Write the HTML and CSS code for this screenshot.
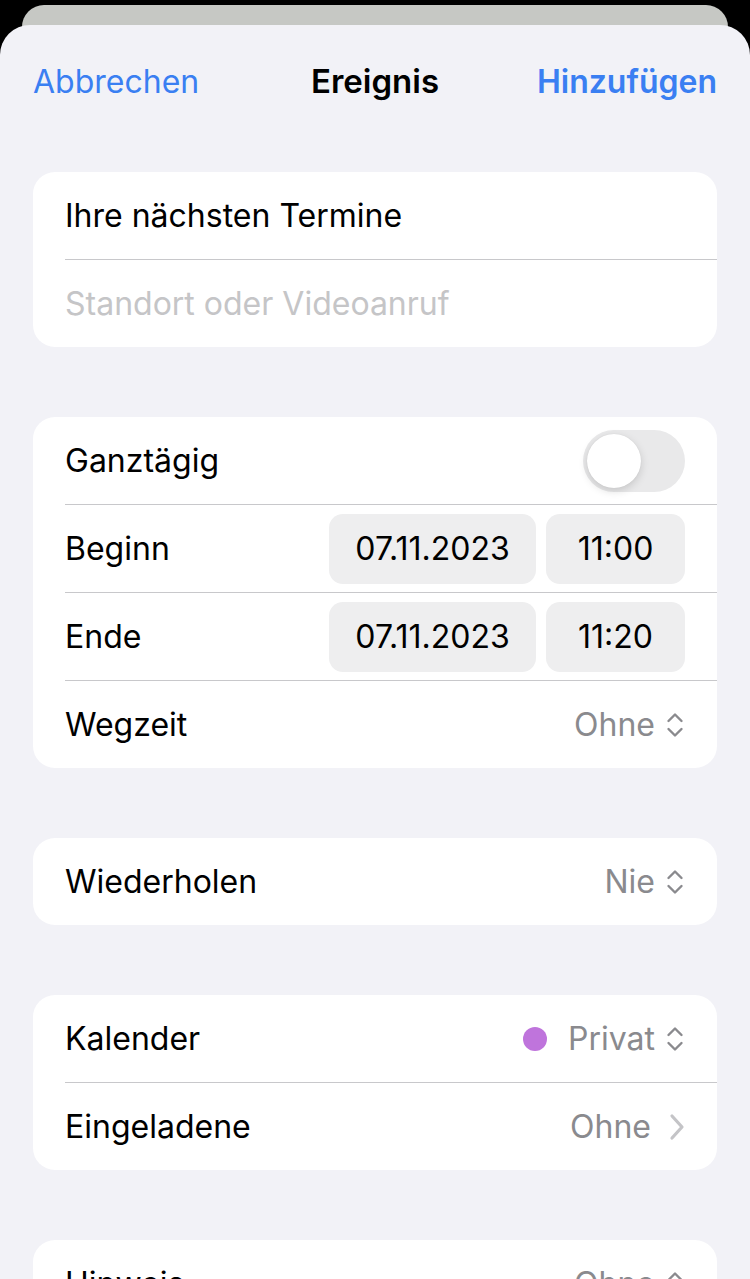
FILE: index.html
```html
<!DOCTYPE html>
<html lang="de">
<head>
    <meta charset="UTF-8">
    <meta name="viewport" content="width=device-width, initial-scale=1.0">
    <title>Ereignis</title>
    <link rel="stylesheet" href="styles.css">
</head>
<body>
    <div class="behind-card"></div>
    <div class="sheet">
        <div class="nav">
            <span class="nav-btn">Abbrechen</span>
            <span class="nav-title">Ereignis</span>
            <span class="nav-btn add">Hinzufügen</span>
        </div>

        <div class="card">
            <div class="row">Ihre nächsten Termine</div>
            <div class="row placeholder">Standort oder Videoanruf</div>
        </div>

        <div class="card">
            <div class="row">
                <span>Ganztägig</span>
                <div class="toggle"><div class="knob"></div></div>
            </div>
            <div class="row">
                <span>Beginn</span>
                <div class="pills">
                    <span class="pill date">07.11.2023</span>
                    <span class="pill time">11:00</span>
                </div>
            </div>
            <div class="row">
                <span>Ende</span>
                <div class="pills">
                    <span class="pill date">07.11.2023</span>
                    <span class="pill time">11:20</span>
                </div>
            </div>
            <div class="row">
                <span>Wegzeit</span>
                <span class="value">Ohne
                    <svg class="updown" width="20" height="30" viewBox="0 0 20 30"><path d="M3.5 11 L10 4.5 L16.5 11 M3.5 19 L10 25.5 L16.5 19" /></svg>
                </span>
            </div>
        </div>

        <div class="card">
            <div class="row">
                <span>Wiederholen</span>
                <span class="value">Nie
                    <svg class="updown" width="20" height="30" viewBox="0 0 20 30"><path d="M3.5 11 L10 4.5 L16.5 11 M3.5 19 L10 25.5 L16.5 19" /></svg>
                </span>
            </div>
        </div>

        <div class="card">
            <div class="row">
                <span>Kalender</span>
                <span class="value"><span class="dot"></span>Privat
                    <svg class="updown" width="20" height="30" viewBox="0 0 20 30"><path d="M3.5 11 L10 4.5 L16.5 11 M3.5 19 L10 25.5 L16.5 19" /></svg>
                </span>
            </div>
            <div class="row">
                <span>Eingeladene</span>
                <span class="value">Ohne
                    <svg class="chevron" width="16" height="28" viewBox="0 0 16 28"><path d="M3 3 L13 14 L3 25" /></svg>
                </span>
            </div>
        </div>

        <div class="card">
            <div class="row">
                <span>Hinweis</span>
                <span class="value">Ohne
                    <svg class="updown" width="20" height="30" viewBox="0 0 20 30"><path d="M3.5 11 L10 4.5 L16.5 11 M3.5 19 L10 25.5 L16.5 19" /></svg>
                </span>
            </div>
        </div>
    </div>
</body>
</html>
```

FILE: styles.css
```css
html, body {
    margin: 0;
    padding: 0;
    background-color: #000;
}
body {
    font-family: Inter, "Noto Sans", sans-serif;
    color: #000;
    padding-top: 5px;
}
.behind-card {
    margin: 0 22px;
    height: 50px;
    background-color: #c6c8c4;
    border-radius: 22px 22px 0 0;
}
.sheet {
    margin-top: -30px;
    background-color: #f2f2f7;
    border-radius: 30px 30px 0 0;
    padding: 0 33px 40px;
    min-height: 1300px;
}
.nav {
    height: 112px;
    display: grid;
    grid-template-columns: 1fr auto 1fr;
    align-items: center;
    margin-bottom: 35px;
    font-size: 32px;
}
.nav-btn {
    color: #3a7ff2;
}
.nav-title {
    font-weight: 600;
    font-size: 33px;
}
.nav-btn.add {
    font-weight: 600;
    text-align: right;
}
.card {
    background-color: #fff;
    border-radius: 22px;
    margin-bottom: 70px;
    overflow: hidden;
}
.row {
    height: 87px;
    margin-left: 32px;
    padding-right: 32px;
    display: flex;
    align-items: center;
    justify-content: space-between;
    font-size: 32px;
}
.row + .row {
    border-top: 1px solid #c8c8cb;
}
.placeholder {
    color: #c5c5c7;
}
.toggle {
    width: 102px;
    height: 62px;
    border-radius: 31px;
    background-color: #e9e9ea;
    padding: 4px;
    box-sizing: border-box;
}
.knob {
    width: 54px;
    height: 54px;
    border-radius: 50%;
    background-color: #fff;
    box-shadow: 0 3px 8px rgba(0, 0, 0, 0.15), 0 0 1px rgba(0, 0, 0, 0.1);
}
.pills {
    display: flex;
    gap: 10px;
}
.pill {
    height: 70px;
    background-color: #eeeeef;
    border-radius: 14px;
    display: flex;
    align-items: center;
    justify-content: center;
}
.pill.date {
    width: 207px;
}
.pill.time {
    width: 139px;
}
.value {
    color: #8a8a8e;
    display: flex;
    align-items: center;
}
.updown {
    margin-left: 10px;
    fill: none;
    stroke: #8a8a8e;
    stroke-width: 2.4;
    stroke-linecap: round;
    stroke-linejoin: round;
}
.chevron {
    margin-left: 18px;
    fill: none;
    stroke: #c4c4c7;
    stroke-width: 3.2;
    stroke-linecap: round;
    stroke-linejoin: round;
}
.dot {
    width: 24px;
    height: 24px;
    border-radius: 50%;
    background-color: #bf74dc;
    margin-right: 21px;
}
```
